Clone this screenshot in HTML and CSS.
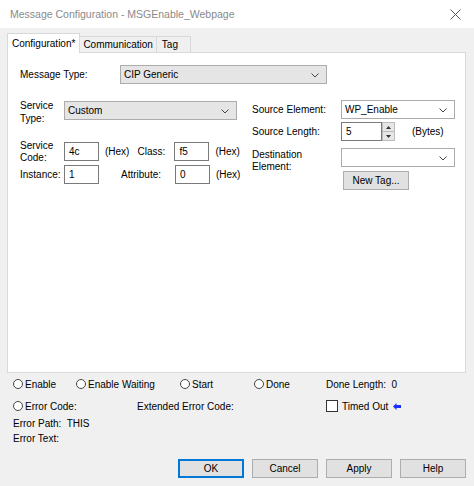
FILE: index.html
```html
<!DOCTYPE html>
<html lang="en">
<head>
  <meta charset="UTF-8" />
  <title>Message Configuration - MSGEnable_Webpage</title>
  <link rel="stylesheet" href="styles.css">
</head>
<body>

<div class="titlebar">
  <span class="title">Message Configuration - MSGEnable_Webpage</span>
  <svg class="close" width="11" height="11" viewBox="0 0 11 11"><path d="M0.5 0.5 L10.5 10.5 M10.5 0.5 L0.5 10.5" stroke="#555" stroke-width="1"/></svg>
</div>

<div class="dialog">

  <!-- Tabs -->
  <div class="tabs">
    <div class="tab active">Configuration*</div>
    <div class="tab">Communication</div>
    <div class="tab tab-tag">Tag</div>
  </div>

  <div class="panel">
    <div class="row msg-type">
      <label class="lbl-wide">Message Type:</label>
      <div class="select grey w-msg">CIP Generic<svg class="chev" width="8" height="5" viewBox="0 0 8 5"><path d="M0.5 0.5 L4 4 L7.5 0.5" fill="none" stroke="#444"/></svg></div>
    </div>

    <div class="cols">
      <!-- Left column -->
      <div class="col-left">
        <div class="row">
          <label class="lbl-2 st">Service<br>Type:</label>
          <div class="select grey w-svc">Custom<svg class="chev" width="8" height="5" viewBox="0 0 8 5"><path d="M0.5 0.5 L4 4 L7.5 0.5" fill="none" stroke="#444"/></svg></div>
        </div>
        <div class="row code-row">
          <label class="lbl-2">Service<br>Code:</label>
          <div class="input w-hex">4c</div>
          <span class="hex">(Hex)</span>
          <span class="lbl-class">Class:</span>
          <div class="input w-hex">f5</div>
          <span class="hex">(Hex)</span>
        </div>
        <div class="row inst-row">
          <label class="lbl-2">Instance:</label>
          <div class="input w-hex">1</div>
          <span class="lbl-attr">Attribute:</span>
          <div class="input w-hex">0</div>
          <span class="hex">(Hex)</span>
        </div>
      </div>

      <!-- Right column -->
      <div class="col-right">
        <div class="row">
          <label class="lbl-src">Source Element:</label>
          <div class="select w-src">WP_Enable<svg class="chev" width="8" height="5" viewBox="0 0 8 5"><path d="M0.5 0.5 L4 4 L7.5 0.5" fill="none" stroke="#444"/></svg></div>
        </div>
        <div class="row len-row">
          <label class="lbl-src">Source Length:</label>
          <div class="input w-len">5</div>
          <div class="spin">
            <div class="spin-btn"><svg width="5" height="3" viewBox="0 0 5 3"><path d="M2.5 0 L5 3 L0 3 Z" fill="#333"/></svg></div>
            <div class="spin-btn"><svg width="5" height="3" viewBox="0 0 5 3"><path d="M0 0 L5 0 L2.5 3 Z" fill="#333"/></svg></div>
          </div>
          <span class="bytes">(Bytes)</span>
        </div>
        <div class="row dest-row">
          <label class="lbl-src lbl-dest">Destination<br>Element:</label>
          <div class="select w-src"><svg class="chev" width="8" height="5" viewBox="0 0 8 5"><path d="M0.5 0.5 L4 4 L7.5 0.5" fill="none" stroke="#444"/></svg></div>
        </div>
        <div class="row tag-row">
          <button class="btn new-tag">New Tag...</button>
        </div>
      </div>
    </div>
  </div>

  <!-- Status -->
  <div class="status">
    <div class="status-row">
      <span class="cell c1"><i class="radio"></i>Enable</span>
      <span class="cell c2"><i class="radio"></i>Enable Waiting</span>
      <span class="cell c3"><i class="radio"></i>Start</span>
      <span class="cell c4"><i class="radio"></i>Done</span>
      <span class="cell">Done Length:&nbsp; 0</span>
    </div>
    <div class="status-row row-2">
      <span class="cell e1"><i class="radio"></i>Error Code:</span>
      <span class="cell e2">Extended Error Code:</span>
      <span class="cell"><i class="check"></i>Timed Out
        <svg class="arrow" width="8" height="7" viewBox="0 0 8 7"><path d="M0 3.5 L3.5 0 L3.5 2 L8 2 L8 5 L3.5 5 L3.5 7 Z" fill="#1a2eff"/></svg>
      </span>
    </div>
    <div class="err-line">Error Path:&nbsp; THIS</div>
    <div class="err-line">Error Text:</div>
  </div>

  <div class="buttons">
    <button class="btn dlg default">OK</button>
    <button class="btn dlg">Cancel</button>
    <button class="btn dlg">Apply</button>
    <button class="btn dlg">Help</button>
  </div>

</div>

</body>
</html>
```

FILE: styles.css
```css
body {
  margin: 0;
  width: 474px;
  height: 486px;
  overflow: hidden;
  background: #f0f0f0;
  font-family: 'Liberation Sans', Arial, sans-serif;
  font-size: 10px;
  color: #000;
}

.titlebar {
  height: 28px;
  background: #fff;
  display: flex;
  align-items: center;
  justify-content: space-between;
  padding: 0 13px 0 10px;
}

.title {
  font-size: 10.5px;
  color: #8a8a8a;
}

.dialog {
  padding: 5px 8px 0 7px;
}

/* tabs */
.tabs {
  display: flex;
  align-items: flex-end;
  height: 19px;
}

.tab {
  height: 15px;
  line-height: 15px;
  padding: 0 3px;
  border: 1px solid #d9d9d9;
  border-bottom: none;
  border-left: none;
  background: #f0f0f0;
}

.tab-tag {
  padding: 0 12px 0 5px;
}

.tab.active {
  height: 19px;
  line-height: 20px;
  padding: 0 4px;
  background: #fff;
  border-left: 1px solid #d9d9d9;
  position: relative;
  top: 1px;
  z-index: 1;
}

.panel {
  height: 307px;
  background: #fff;
  border: 1px solid #d9d9d9;
  padding: 12px 0 0 12px;
}

.row {
  display: flex;
  align-items: center;
  height: 19px;
}

.lbl-wide { width: 100px; }

.select {
  height: 17px;
  line-height: 17px;
  border: 1px solid #acacac;
  background: #fff;
  padding-left: 3px;
  position: relative;
}

.select.grey {
  background: #e5e5e5;
}

.chev {
  position: absolute;
  right: 7px;
  top: 7px;
}

.w-msg { width: 202px; }
.w-svc { width: 168px; }
.w-src { width: 109px; }

.cols {
  display: flex;
  margin-top: 16px;
}

.col-left {
  width: 232px;
  padding-top: 1px;
}

.col-right {
  width: 210px;
}

.lbl-2 {
  width: 44px;
  line-height: 12px;
}

.st {
  line-height: 13px;
  position: relative;
  top: 1px;
}

.code-row { margin-top: 22px; }
.inst-row { margin-top: 4px; }

.input {
  height: 17px;
  line-height: 17px;
  border: 1px solid #7a7a7a;
  background: #fff;
  padding-left: 4px;
}

.w-hex { width: 29px; }
.w-len { width: 35px; }

.hex { margin-left: 6px; }
.lbl-class { margin-left: 8px; width: 37px; }
.lbl-attr { margin-left: 22px; width: 54px; }

.lbl-src { width: 89px; }

.len-row { margin-top: 3px; }
.dest-row { margin-top: 7px; }
.lbl-dest {
  line-height: 12px;
  position: relative;
  top: 3px;
}
.tag-row { margin-top: 4px; padding-left: 91px; }

.spin {
  display: flex;
  flex-direction: column;
  height: 19px;
  width: 13px;
}

.spin-btn {
  flex: 1;
  display: flex;
  align-items: center;
  justify-content: center;
  background: #e6e6e6;
  border: 1px solid #bcbcbc;
}

.spin-btn + .spin-btn { border-top: none; }

.bytes { margin-left: 17px; }

.btn {
  font-family: inherit;
  font-size: 10px;
  color: #000;
  background: #e1e1e1;
  border: 1px solid #adadad;
  padding: 0;
}

.new-tag {
  width: 66px;
  height: 19px;
}

/* status */
.status {
  padding: 4px 0 0 6px;
}

.status-row {
  display: flex;
  align-items: center;
  height: 14px;
}

.row-2 { margin-top: 8px; }

.cell {
  display: flex;
  align-items: center;
}

.c1 { width: 63px; }
.c2 { width: 104px; }
.c3 { width: 74px; }
.c4 { width: 72px; }
.e1 { width: 124px; }
.e2 { width: 189px; }

.radio {
  width: 8px;
  height: 8px;
  border: 1px solid #444;
  border-radius: 50%;
  background: #fff;
  margin-right: 2px;
}

.check {
  width: 10px;
  height: 10px;
  border: 1px solid #333;
  background: #fff;
  margin-right: 4px;
}

.arrow { margin-left: 5px; }

.err-line {
  line-height: 15px;
  margin-top: 3px;
}

.err-line + .err-line { margin-top: 0; }

.buttons {
  display: flex;
  justify-content: flex-end;
  gap: 8px;
  margin-top: 13px;
}

.dlg {
  width: 66px;
  height: 19px;
}

.default {
  border: 2px solid #0078d7;
}
```
